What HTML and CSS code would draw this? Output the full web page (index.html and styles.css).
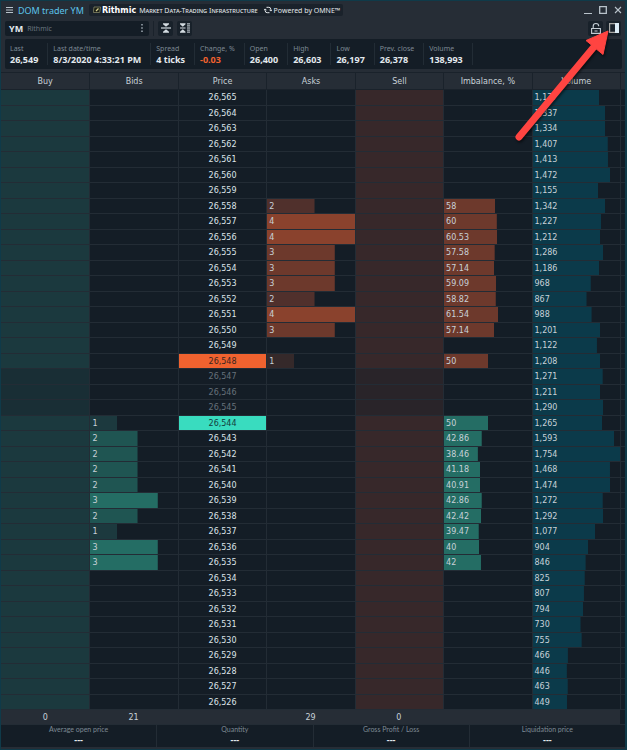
FILE: index.html
```
<!DOCTYPE html>
<html lang="en">
<head>
    <meta charset="UTF-8">
    <meta name="viewport" content="width=device-width, initial-scale=1.0">
    <title>DOM trader YM</title>
    <link rel="stylesheet" href="styles.css">
</head>
<body>
    <div class="window">
        <header class="titlebar">
            <button type="button" class="icon-btn" aria-label="Menu">
                <svg width="7" height="8" viewBox="0 0 7 8"><path d="M0 1.500h7M0 4h7M0 6.500h7" stroke="#b9c3cb" stroke-width="1"/></svg>
            </button>
            <h1>DOM trader YM</h1>
            <div class="brand">
                <svg width="8" height="8" viewBox="0 0 8 8"><path d="M1 1h6.500l-.8 5.500H.3z" fill="#1c2017" stroke="#77785e" stroke-width=".9"/><path d="M3 5 5.500 2.500" stroke="#d8d08c" stroke-width="1.200"/></svg>
                <strong>Rithmic</strong>
                <span class="tagline">Market Data-Trading Infrastructure</span>
                <svg width="8" height="8" viewBox="0 0 8 8"><path d="M2.500 1.300h2.300a2 2 0 0 1 2 2v1.400M5.500 6.700H3.200a2 2 0 0 1-2-2V3.300M0 4.300l1.200-1.400 1.300 1.400M5.500 3.700l1.300 1.400L8 3.700" fill="none" stroke="#e3e7ea" stroke-width="1"/></svg>
                <span class="powered">Powered by OMNE™</span>
            </div>
            <div class="window-controls">
                <button type="button" class="icon-btn" aria-label="Minimize">
                    <svg width="8" height="8" viewBox="0 0 8 8"><path d="M0 7.500h8" stroke="#b9c3cb"/></svg>
                </button>
                <button type="button" class="icon-btn" aria-label="Maximize">
                    <svg width="8" height="8" viewBox="0 0 8 8"><path d="M.7.7h6.600v6.600H.7z" fill="none" stroke="#b9c3cb" stroke-width="1.300"/></svg>
                </button>
                <button type="button" class="icon-btn" aria-label="Close">
                    <svg width="8" height="8" viewBox="0 0 8 8"><path d="M1 1l6 6M7 1 1 7" stroke="#b9c3cb" stroke-width="1.100"/></svg>
                </button>
            </div>
        </header>

        <div class="toolbar">
            <button type="button" class="symbol">
                <b>YM</b>
                <span>Rithmic</span>
                <svg width="2" height="8" viewBox="0 0 2 8"><path d="M.3 0h1.400v1.500H.3zM.3 3.200h1.400v1.500H.3zM.3 6.400h1.400v1.500H.3z" fill="#a9b4bd"/></svg>
            </button>
            <i class="divider"></i>
            <button type="button" class="tool" aria-label="Center price">
                <svg width="10" height="10" viewBox="0 0 10 10"><path d="M0 5h10" stroke="#d3dbe1" stroke-width="1.200"/><path d="M2 .3h6v.9L5 3.700 2 1.200zM2 9.700h6v-.9L5 6.300 2 8.800z" fill="#d3dbe1"/></svg>
            </button>
            <button type="button" class="tool" aria-label="Center rows">
                <svg width="10" height="10" viewBox="0 0 10 10"><path d="M0 5h5.500M7 5h3M7 .9h3M7 2.900h3M7 7.100h3M7 9.100h3" stroke="#d3dbe1" stroke-width="1"/><path d="M0 .3h5.500v.9L2.800 3.700 0 1.200zM0 9.700h5.500v-.9L2.800 6.300 0 8.800z" fill="#d3dbe1"/></svg>
            </button>
            <div class="toolbar-right">
                <button type="button" class="tool" aria-label="Lock trading">
                    <svg width="10" height="11" viewBox="0 0 10 11"><path d="M.6 5.500h8.800v4.900H.6zM2.200 5.500V3.300a2.700 2.700 0 0 1 5.500 0M3.500 8h3" fill="none" stroke="#c3ccd3" stroke-width="1.100"/></svg>
                </button>
                <button type="button" class="tool" aria-label="Toggle side panel">
                    <svg width="10" height="10" viewBox="0 0 10 10"><path d="M.6.6h8.800v8.800H.6z" fill="none" stroke="#a9a9a6" stroke-width="1.200"/><path d="M6 0h4v10H6z" fill="#dcecf6"/></svg>
                </button>
            </div>
        </div>

        <dl class="stats">
            <div><dt>Last</dt><dd>26,549</dd></div>
            <div><dt>Last date/time</dt><dd>8/3/2020 4:33:21 PM</dd></div>
            <div><dt>Spread</dt><dd>4 ticks</dd></div>
            <div><dt>Change, %</dt><dd class="negative">-0.03</dd></div>
            <div><dt>Open</dt><dd>26,400</dd></div>
            <div><dt>High</dt><dd>26,603</dd></div>
            <div><dt>Low</dt><dd>26,197</dd></div>
            <div><dt>Prev. close</dt><dd>26,378</dd></div>
            <div><dt>Volume</dt><dd>138,993</dd></div>
        </dl>

        <table class="dom">
            <thead>
                <tr>
                    <th>Buy</th>
                    <th>Bids</th>
                    <th>Price</th>
                    <th>Asks</th>
                    <th>Sell</th>
                    <th>Imbalance, %</th>
                    <th>Volume</th>
                    <th class="gutter"></th>
                </tr>
            </thead>
            <tbody id="domRows"></tbody>
            <tfoot>
                <tr>
                    <td>0</td>
                    <td>21</td>
                    <td></td>
                    <td>29</td>
                    <td>0</td>
                    <td></td>
                    <td></td>
                    <td class="gutter"></td>
                </tr>
            </tfoot>
        </table>

        <dl class="position">
            <div><dt>Average open price</dt><dd>---</dd></div>
            <div><dt>Quantity</dt><dd>---</dd></div>
            <div><dt>Gross Profit / Loss</dt><dd>---</dd></div>
            <div><dt>Liquidation price</dt><dd>---</dd></div>
        </dl>

        <!-- pointer to the side panel button -->
        <svg class="arrow" width="100" height="116" viewBox="0 0 100 116">
            <path d="M6 110 80 21" stroke="#ff4441" stroke-width="7" stroke-linecap="round"/>
            <path d="M95 4 73 13.500 90 27.500z" fill="#ff4441" stroke="#ff4441"/>
        </svg>
    </div>

    <script src="script.js"></script>
</body>
</html>
```
FILE: styles.css
```
* {
    box-sizing: border-box;
}

body {
    margin: 0;
    background-color: #0d2d3b;
    color: #c8d1d8;
    font-family: "Noto Sans", "Open Sans", sans-serif;
    font-size: 9px;
}

button {
    font: inherit;
    color: inherit;
    border: none;
    padding: 0;
    background: none;
    cursor: pointer;
}

svg {
    display: block;
    flex: none;
}

dl,
dd {
    margin: 0;
}

.window {
    position: relative;
    display: flex;
    flex-direction: column;
    min-height: 100vh;
    padding-bottom: 2px;
    background-color: #262d36;
    border: 1px solid #0f3a49;
    border-right-width: 2px;
}

/* Title bar */
.titlebar {
    display: flex;
    align-items: center;
    height: 18px;
    padding: 0 3px 0 5px;
}

.titlebar h1 {
    margin: 0 5px;
    font-size: 9px;
    font-weight: normal;
    color: #5cc3ea;
    white-space: nowrap;
}

.brand {
    display: flex;
    align-items: center;
    height: 12px;
    padding: 0 3px 0 4px;
    border-radius: 2px;
    background-color: #1a222b;
    color: #e3e7ea;
    white-space: nowrap;
}

.brand strong {
    margin: 0 3px 0 1px;
    font-family: "DejaVu Sans", sans-serif;
    font-size: 8px;
    color: #fff;
}

.tagline {
    margin-right: 6px;
    font-size: 7px;
    font-variant: small-caps;
}

.powered {
    margin-left: 2px;
    font-size: 7px;
}

.window-controls {
    display: flex;
    gap: 7px;
    margin-left: auto;
}

/* Toolbar */
.toolbar {
    display: flex;
    align-items: center;
    gap: 4px;
    height: 18px;
    padding: 0 4px;
}

.symbol {
    display: flex;
    align-items: center;
    gap: 4px;
    width: 144px;
    height: 15px;
    padding: 0 6px 0 4px;
    border-radius: 2px;
    background-color: #141d26;
    color: #e3e9ee;
}

.symbol span {
    font-size: 7px;
    color: #68747e;
}

.symbol svg {
    margin-left: auto;
}

.divider {
    width: 1px;
    height: 15px;
    background-color: #1a222b;
}

/* Follows the divider and its sibling buttons */
.tool {
    display: flex;
    align-items: center;
    justify-content: center;
    width: 15px;
    height: 15px;
    border-radius: 2px;
    background-color: #18212a;
}

.toolbar-right {
    display: flex;
    gap: 3px;
    margin-left: auto;
}

/* Instrument summary */
.stats {
    display: flex;
    margin: 2px 3px 3px 4px;
    padding: 4px 0;
    border-radius: 2px;
    background-color: #141d26;
}

.stats div {
    padding: 0 9px 0 5px;
    border-right: 1px solid #222c35;
    white-space: nowrap;
}

.stats dt {
    font-size: 7px;
    line-height: 11px;
    color: #7d8993;
}

.stats dd {
    font-weight: bold;
    line-height: 11px;
    color: #e3e9ee;
}

.stats .negative {
    color: #f0622f;
}

/* Price ladder */
.dom {
    flex: 1;
    width: 100%;
    table-layout: fixed;
    border-spacing: 0;
    font-family: "DejaVu Sans", sans-serif;
    font-size: 8px;
    line-height: 13px;
    background-color: #141d26;
}

.dom th,
.dom td {
    padding: 0;
}

.dom th {
    height: 18px;
    font-weight: normal;
    background-color: #262d36;
    border-top: 1px solid #1a222b;
    border-bottom: 1px solid #1a222b;
    border-left: 1px solid #1a222b;
}

.dom th:first-child {
    border-left: none;
}

.dom .gutter {
    width: 5px;
}

.dom tbody td {
    padding: 1px 0 0 2px;
    border-bottom: 1px solid #232c35;
    border-left: 1px solid #232c35;
    background-repeat: no-repeat;
    background-clip: padding-box;
}

.dom tbody .buy {
    background-color: #1b393e;
    border-left: none;
}

.dom tbody .sell {
    background-color: #37282a;
}

.dom tbody .price {
    padding-left: 0;
    text-align: center;
    color: #dde4e9;
}

.dom .spread .buy {
    background-color: #192e35;
}

.dom .spread .sell {
    background-color: #292429;
}

.dom .spread .price {
    color: #66717a;
}

.dom .best-ask .price {
    background-color: #f0622f;
    color: #3a2520;
}

.dom .best-bid .price {
    background-color: #39dcbf;
    color: #143c3c;
}

.bid-1 { background-image: linear-gradient(#1c393e, #1c393e); }
.bid-2 { background-image: linear-gradient(#1f5552, #1f5552); }
.bid-3 { background-image: linear-gradient(#246d64, #246d64); }
.ask-1 { background-image: linear-gradient(#35292a, #35292a); }
.ask-2 { background-image: linear-gradient(#50302c, #50302c); }
.ask-3 { background-image: linear-gradient(#6d392c, #6d392c); }
.ask-4 { background-image: linear-gradient(#8a422d, #8a422d); }
.volume { background-image: linear-gradient(#0b3a4a, #0b3a4a); }

.dom tfoot td {
    height: 14px;
    text-align: center;
    background-color: #262d36;
}

.dom tfoot .gutter {
    background-color: #141d26;
}

/* Position summary */
.position {
    display: flex;
    border-top: 1px solid #232c35;
    background-color: #141d26;
}

.position div {
    flex: 1;
    padding-bottom: 1px;
    text-align: center;
    border-left: 1px solid #232c35;
}

.position div:first-child {
    border-left: none;
}

.position dt {
    font-family: Lato, sans-serif;
    font-size: 7px;
    line-height: 9px;
    color: #7d8993;
}

.position dd {
    font-weight: bold;
    line-height: 12px;
    color: #e3e9ee;
}

.arrow {
    position: absolute;
    top: 26px;
    right: 12px;
    filter: drop-shadow(1px 2px 1px rgba(0, 0, 0, 0.5));
    pointer-events: none;
}
```
FILE: script.js
```
const TOP_PRICE = 26565;
const BEST_ASK = 26548;
const BEST_BID = 26544;
const SIZE_WIDTH = { 1: 31, 2: 54, 3: 77, 4: 100 };

const volumes = [
    1177, 1337, 1334, 1407, 1413, 1472, 1155, 1342, 1227, 1212,
    1286, 1186, 968, 867, 988, 1201, 1122, 1208, 1271, 1211,
    1290, 1265, 1593, 1754, 1468, 1474, 1272, 1292, 1077, 904,
    846, 825, 807, 794, 730, 755, 466, 446, 463, 449
];

// price: [size, imbalance]
const asks = {
    26558: [2, 58], 26557: [4, 60], 26556: [4, 60.53], 26555: [3, 57.58],
    26554: [3, 57.14], 26553: [3, 59.09], 26552: [2, 58.82], 26551: [4, 61.54],
    26550: [3, 57.14], 26548: [1, 50]
};
const bids = {
    26544: [1, 50], 26543: [2, 42.86], 26542: [2, 38.46], 26541: [2, 41.18],
    26540: [2, 40.91], 26539: [3, 42.86], 26538: [2, 42.42], 26537: [1, 39.47],
    26536: [3, 40], 26535: [3, 42]
};

const maxVolume = Math.max(...volumes);
const domRows = document.getElementById('domRows');

function addCell(row, className, text, width) {
    const td = row.insertCell();
    td.className = className;
    td.textContent = text;
    if (width) {
        td.style.backgroundSize = `${width}% 100%`;
    }
}

volumes.forEach((volume, i) => {
    const price = TOP_PRICE - i;
    const bid = bids[price];
    const ask = asks[price];
    const row = domRows.insertRow();

    if (price === BEST_ASK) {
        row.className = 'best-ask';
    } else if (price === BEST_BID) {
        row.className = 'best-bid';
    } else if (price < BEST_ASK && price > BEST_BID) {
        row.className = 'spread';
    }

    addCell(row, 'buy', '');
    addCell(row, bid ? `bid-${bid[0]}` : '', bid ? bid[0] : '', bid && SIZE_WIDTH[bid[0]]);
    addCell(row, 'price', price.toLocaleString('en-US'));
    addCell(row, ask ? `ask-${ask[0]}` : '', ask ? ask[0] : '', ask && SIZE_WIDTH[ask[0]]);
    addCell(row, 'sell', '');

    const level = bid || ask;
    const imbalanceClass = bid ? 'bid-3' : ask ? 'ask-3' : '';
    addCell(row, imbalanceClass, level ? level[1] : '', level && level[1]);

    // bars are compressed so thin levels stay visible
    addCell(row, 'volume', volume.toLocaleString('en-US'), Math.pow(volume / maxVolume, 0.69) * 100);
    addCell(row, 'gutter', '');
});
```
